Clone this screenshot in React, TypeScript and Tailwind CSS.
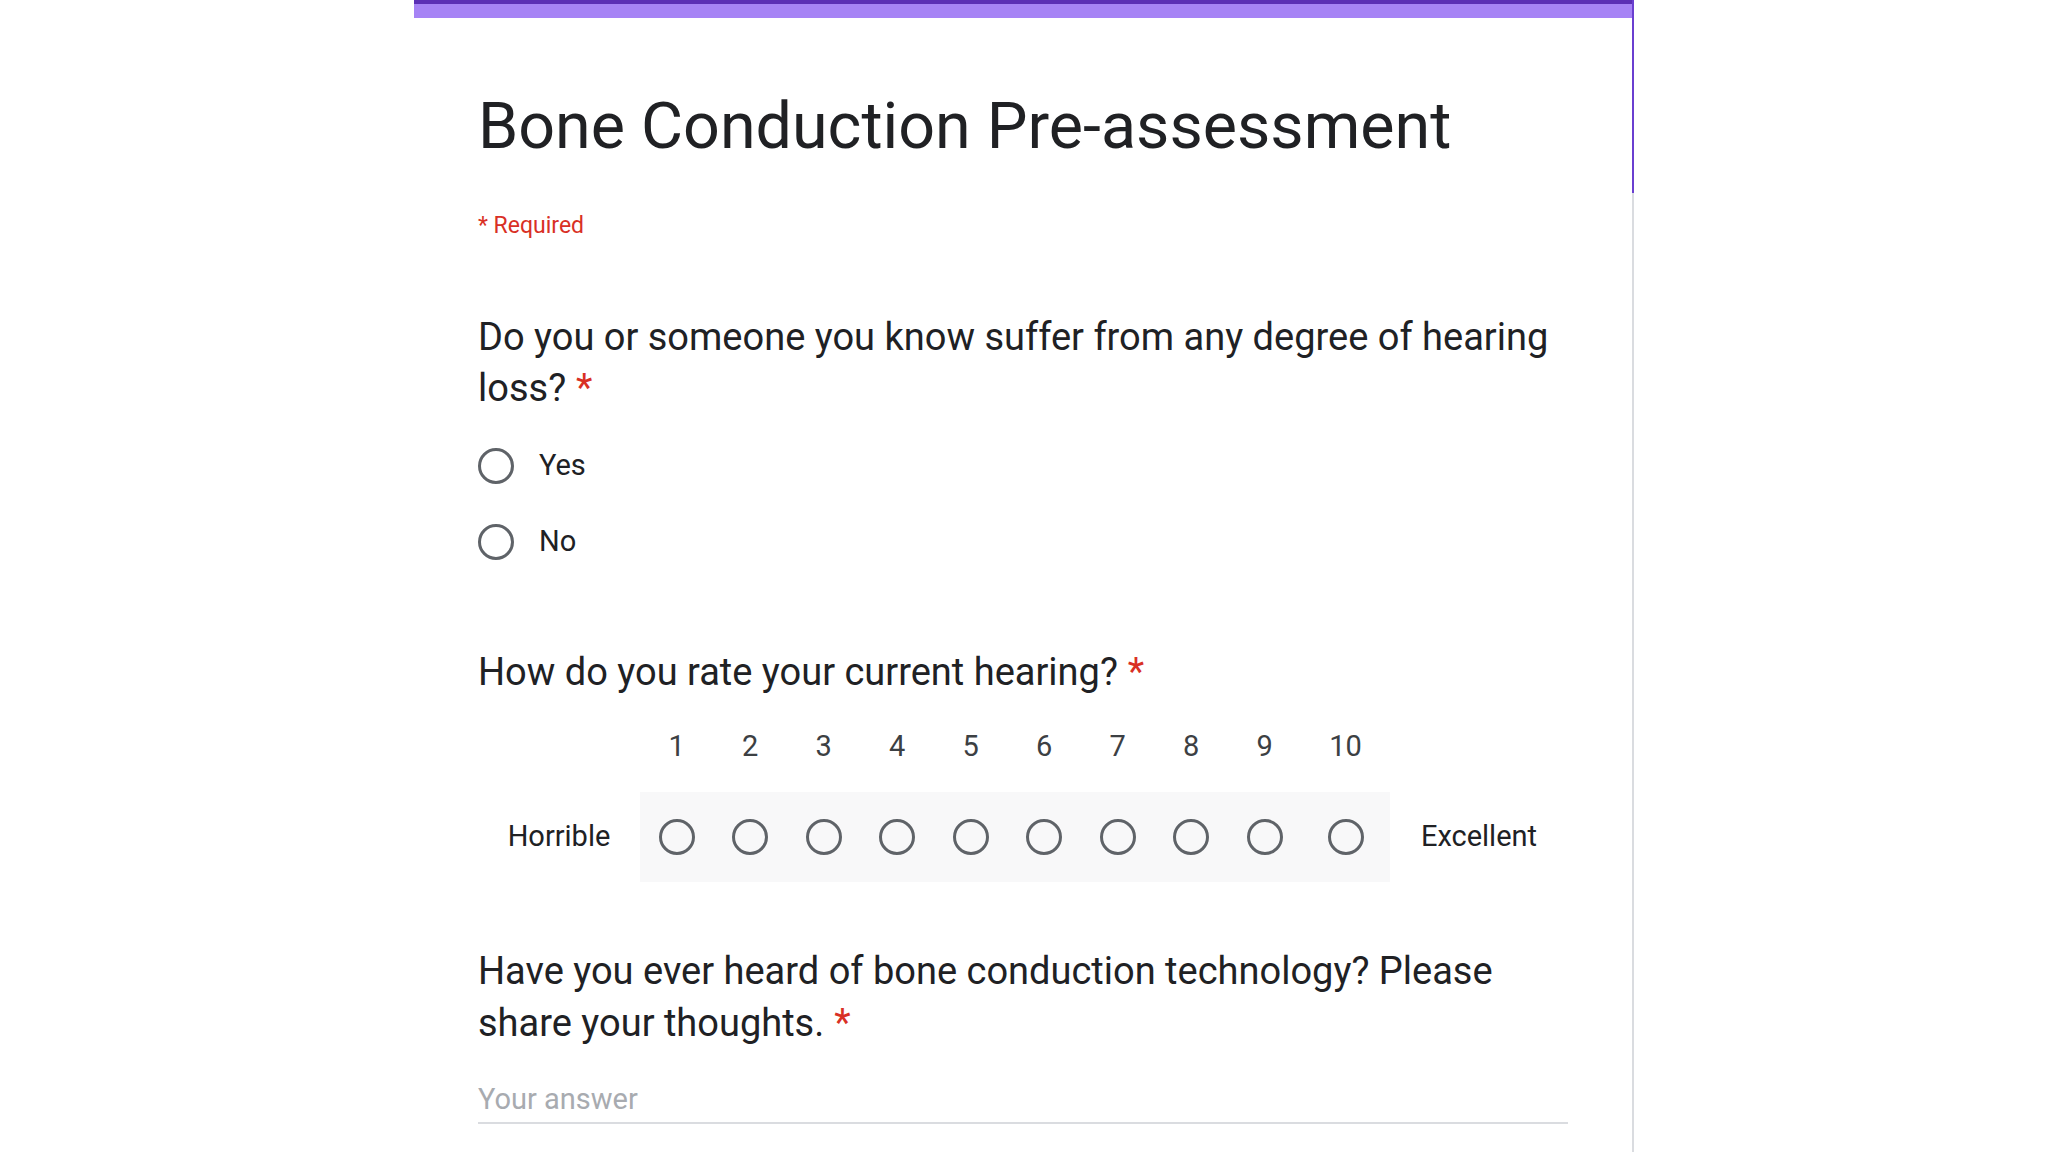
import React from "react";

const Radio = () => (
  <span className="block w-[36px] h-[36px] rounded-full border-[3px] border-[#5f6368] shrink-0" />
);

const Star = () => <span className="text-[#d93025] ml-[10px]">*</span>;

export default function App() {
  const nums = [1, 2, 3, 4, 5, 6, 7, 8, 9, 10];
  return (
    <div
      className="w-[2048px] h-[1152px] bg-white overflow-hidden"
      style={{ fontFamily: "Roboto, 'Liberation Sans', sans-serif" }}
    >
      <div className="ml-[414px] w-[1220px]">
        {/* header card */}
        <div className="h-[193px] border-r-2 border-[#6a3fd0]">
          <div className="h-[4px] bg-[#5b2fb5]" />
          <div className="h-[14px] bg-[#a683f5]" />
          <h1 className="mt-[70px] pl-[64px] text-[64.6px] leading-[76px] text-[#202124] font-normal">
            Bone Conduction Pre-assessment
          </h1>
        </div>
        {/* body */}
        <div className="border-r-2 border-[#dadce0] pl-[64px] pr-[64px] pt-[17px] h-[959px]">
          <div className="text-[23px] leading-[32px] text-[#d93025]">* Required</div>

          <div className="mt-[70px] text-[38px] leading-[51px] text-[#202124]">
            Do you or someone you know suffer from any degree of hearing loss?<Star />
          </div>
          <div className="mt-[14px]">
            <div className="h-[76px] flex items-center gap-[25px]">
              <Radio />
              <span className="text-[29px] text-[#202124]">Yes</span>
            </div>
            <div className="h-[76px] flex items-center gap-[25px]">
              <Radio />
              <span className="text-[29px] text-[#202124]">No</span>
            </div>
          </div>

          <div className="mt-[67px] text-[38px] leading-[51px] text-[#202124]">
            How do you rate your current hearing?<Star />
          </div>
          <div className="mt-[24px] flex h-[50px] items-center">
            <div className="w-[162px]" />
            <div className="flex w-[750px]">
              {nums.map((n) => (
                <div
                  key={n}
                  className={`${n === 10 ? "w-[88px]" : "w-[73.5px]"} text-center text-[29px] text-[#3c4043]`}
                >
                  {n}
                </div>
              ))}
            </div>
          </div>
          <div className="mt-[20px] flex items-center">
            <div className="w-[162px] text-center text-[29px] text-[#202124]">Horrible</div>
            <div className="flex w-[750px] h-[90px] items-center bg-[#f8f8f9]">
              {nums.map((n) => (
                <div
                  key={n}
                  className={`${n === 10 ? "w-[88px]" : "w-[73.5px]"} flex justify-center`}
                >
                  <Radio />
                </div>
              ))}
            </div>
            <div className="flex-1 text-center text-[29px] text-[#202124]">Excellent</div>
          </div>

          <div className="mt-[63px] text-[38px] leading-[52px] text-[#202124]">
            Have you ever heard of bone conduction technology? Please share your thoughts.<Star />
          </div>
          <div className="mt-[30px] pb-[3px] border-b-2 border-[#dadce0] text-[29px] leading-[40px] text-[#a8abb0]">
            Your answer
          </div>
        </div>
      </div>
    </div>
  );
}
